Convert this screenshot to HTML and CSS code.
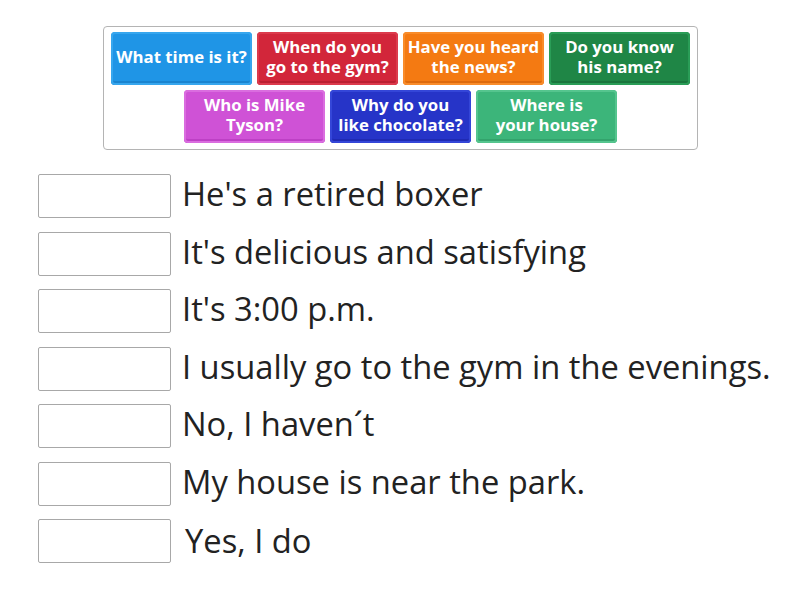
FILE: index.html
```html
<!DOCTYPE html>
<html>
<head>
<meta charset="utf-8">
<link rel="stylesheet" href="styles.css">
</head>
<body>
<div class="page">
  <div class="bank">
    <div class="tile blue">What time is it?</div>
    <div class="tile red">When do you<br>go to the gym?</div>
    <div class="tile orange">Have you heard<br>the news?</div>
    <div class="tile green">Do you know<br>his name?</div>
    <div class="tile pink">Who is Mike<br>Tyson?</div>
    <div class="tile navy">Why do you<br>like chocolate?</div>
    <div class="tile teal">Where is<br>your house?</div>
  </div>
  <div class="answers">
    <div class="row"><div class="slot"></div><div class="text">He's a retired boxer</div></div>
    <div class="row"><div class="slot"></div><div class="text">It's delicious and satisfying</div></div>
    <div class="row"><div class="slot"></div><div class="text">It's 3:00 p.m.</div></div>
    <div class="row"><div class="slot"></div><div class="text">I usually go to the gym in the evenings.</div></div>
    <div class="row"><div class="slot"></div><div class="text">No, I haven´t</div></div>
    <div class="row"><div class="slot"></div><div class="text">My house is near the park.</div></div>
    <div class="row"><div class="slot"></div><div class="text shifted">Yes, I do</div></div>
  </div>
</div>
</body>
</html>
```

FILE: styles.css
```css
html, body {
  margin: 0;
  padding: 0;
  background: #ffffff;
}
body {
  font-family: "Open Sans", "Liberation Sans", sans-serif;
}
.page {
  width: 800px;
  padding-top: 26px;
}
.bank {
  box-sizing: border-box;
  width: 595px;
  margin-left: 103px;
  border: 1px solid #b4b4b4;
  border-radius: 4px;
  padding: 5px 6px 6px 6px;
  display: flex;
  flex-wrap: wrap;
  justify-content: center;
  gap: 5px;
}
.tile {
  box-sizing: border-box;
  width: 141px;
  height: 53px;
  border-radius: 4px;
  color: #ffffff;
  font-weight: 700;
  font-size: 16.8px;
  line-height: 20px;
  text-align: center;
  display: flex;
  align-items: center;
  justify-content: center;
  padding: 0 2px 4px 2px;
  white-space: nowrap;
  box-shadow: inset 0 0 0 2px var(--ring), inset 0 -4px 0 0 var(--dark);
  background: var(--main);
}
.blue   { --main: #1f95e6; --ring: #36a6ee; --dark: #1a84cf; }
.red    { --main: #d2263a; --ring: #dc3a4c; --dark: #bb1f31; }
.orange { --main: #f47a12; --ring: #f98c2a; --dark: #dd6a0c; }
.green  { --main: #1f8646; --ring: #2a9d57; --dark: #1a763d; }
.pink   { --main: #cf52d6; --ring: #da6ddf; --dark: #bd40c5; }
.navy   { --main: #2634c8; --ring: #3446d8; --dark: #1f2ab3; }
.teal   { --main: #3cb57a; --ring: #55c58e; --dark: #33a36c; }

.answers {
  margin-top: 24px;
  padding-left: 38px;
  display: flex;
  flex-direction: column;
  gap: 13.5px;
}
.row {
  display: flex;
  align-items: center;
  height: 44px;
}
.slot {
  box-sizing: border-box;
  width: 133px;
  height: 44px;
  border: 1px solid #a8a8a8;
  border-radius: 2px;
  background: #fff;
  flex: none;
}
.text {
  margin-left: 11px;
  font-size: 32.7px;
  line-height: 40px;
  padding-bottom: 4px;
  color: #222222;
  white-space: nowrap;
}
.shifted {
  margin-left: 14px;
  padding-bottom: 0;
}
```
